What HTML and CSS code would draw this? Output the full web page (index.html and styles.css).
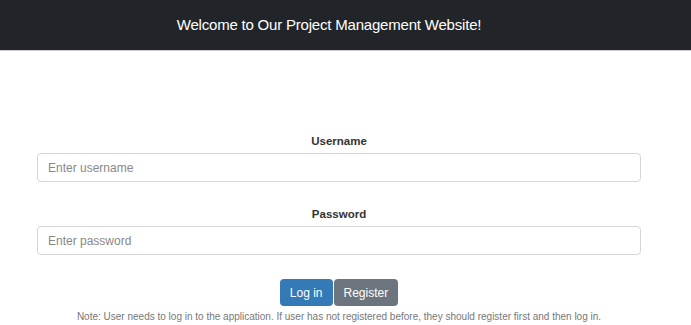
FILE: index.html
```html
<!DOCTYPE html>
<html lang="en">
<head>
    <meta charset="UTF-8">
    <meta name="viewport" content="width=device-width, initial-scale=1.0">
    <title>Project Management | Log in</title>
    <link rel="stylesheet" href="styles.css">
</head>
<body>
    <header class="topbar">
        <h1>Welcome to Our Project Management Website!</h1>
    </header>

    <main class="login">
        <form class="login-form">
            <div class="field">
                <label for="username">Username</label>
                <input type="text" id="username" placeholder="Enter username">
            </div>
            <div class="field">
                <label for="password">Password</label>
                <input type="password" id="password" placeholder="Enter password">
            </div>
            <div class="actions">
                <button type="submit" class="btn btn-primary">Log in</button>
                <button type="button" class="btn btn-secondary">Register</button>
            </div>
            <p class="note">Note: User needs to log in to the application. If user has not registered before, they should register first and then log in.</p>
        </form>
    </main>
</body>
</html>
```

FILE: styles.css
```css
* { box-sizing: border-box; margin: 0; padding: 0; }
body { font-family: 'Liberation Sans', Arial, sans-serif; color: #333; background: #fff; }

.topbar { background: #212529; height: 51px; border-bottom: 1px solid #ccc; display: flex; align-items: center; justify-content: center; padding: 0 33px 2px 0; }
.topbar h1 { color: #fff; font-size: 15px; font-weight: normal; letter-spacing: -0.2px; }

.login { padding: 84px 50px 0 37px; }
.login-form { width: 604px; }

.field { display: flex; flex-direction: column; margin-bottom: 26px; }
.field label { text-align: center; font-size: 11.5px; font-weight: bold; margin-bottom: 6px; }
.field input { height: 29px; border: 1px solid #d6d6d6; border-radius: 4px; padding: 0 10px; font-size: 12px; font-family: inherit; color: #555; }
.field input::placeholder { color: #888; }

.actions { display: flex; justify-content: center; margin-top: -2px; }
.btn { height: 27px; padding: 0 10px; border: none; border-radius: 4px; font-size: 12px; font-family: inherit; color: #fff; cursor: pointer; }
.btn-primary { background: #337ab7; }
.btn-secondary { background: #6c757d; margin-left: 1px; }

.note { text-align: center; font-size: 10px; color: #777; margin-top: 5px; }
```
